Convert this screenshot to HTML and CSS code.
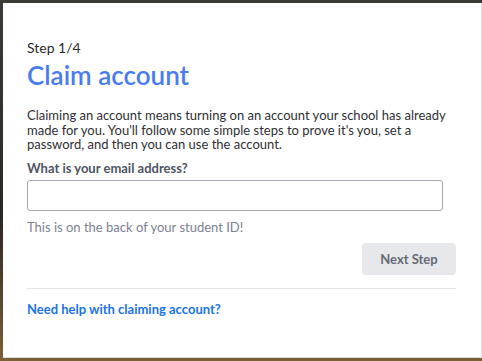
FILE: index.html
```html
<!DOCTYPE html>
<html lang="en">
<head>
<meta charset="utf-8">
<title>Claim account</title>
<link rel="stylesheet" href="styles.css">
</head>
<body>
<div class="backdrop">
  <div class="modal">
    <div class="step">Step 1/4</div>
    <h1 class="title">Claim account</h1>
    <p class="intro">Claiming an account means turning on an account your school has already made for you. You'll follow some simple steps to prove it's you, set a password, and then you can use the account.</p>
    <label class="label" for="email">What is your email address?</label>
    <input class="input" id="email" type="text">
    <div class="hint">This is on the back of your student ID!</div>
    <div class="actions">
      <button class="btn" type="button">Next Step</button>
    </div>
    <hr class="divider">
    <a class="help" href="#">Need help with claiming account?</a>
  </div>
</div>
</body>
</html>
```
FILE: styles.css
```css
* { box-sizing: border-box; }
html, body { margin: 0; padding: 0; }
body {
  width: 482px;
  height: 361px;
  overflow: hidden;
  background: linear-gradient(180deg, #3b3c36 0%, #2a2722 60%, #7b6038 100%);
  font-family: Lato, "Open Sans", sans-serif;
}
.backdrop {
  padding: 3px 0 3px 3px;
}
.modal {
  width: 479px;
  height: 355px;
  background: #fff;
  border-right: 1px solid #d9d9de;
  border-bottom: 1px solid #d9d9de;
  padding: 36px 25px 0 24px;
  display: flex;
  flex-direction: column;
}
.step {
  font-size: 14px;
  line-height: 17px;
  color: #2b2b2b;
}
.title {
  margin: 4px 0 0;
  font-size: 26px;
  line-height: 30px;
  font-weight: 600;
  color: #4a7cf0;
}
.intro {
  margin: 18px 0 0;
  font-size: 13px;
  line-height: 14.5px;
  color: #2f2f33;
  padding-right: 10px;
}
.label {
  margin-top: 8px;
  font-size: 13px;
  line-height: 16px;
  font-weight: 700;
  color: #4f5462;
}
.input {
  margin-top: 4px;
  width: 416px;
  height: 31px;
  border: 1px solid #a3a7b3;
  border-radius: 3px;
  font: inherit;
}
.hint {
  margin-top: 8px;
  font-size: 13px;
  line-height: 16px;
  color: #7c8190;
}
.actions {
  display: flex;
  justify-content: flex-end;
  margin-top: 8px;
}
.btn {
  width: 94px;
  height: 32px;
  border: 0;
  border-radius: 4px;
  background: #e7e8eb;
  color: #656a76;
  font-family: inherit;
  font-size: 13px;
  font-weight: 700;
}
.divider {
  margin: 13px 0 0;
  border: 0;
  border-top: 1px solid #e3e4e8;
  height: 0;
}
.help {
  margin-top: 12px;
  font-size: 13px;
  line-height: 16px;
  font-weight: 700;
  color: #1a73e8;
  text-decoration: none;
}
```
